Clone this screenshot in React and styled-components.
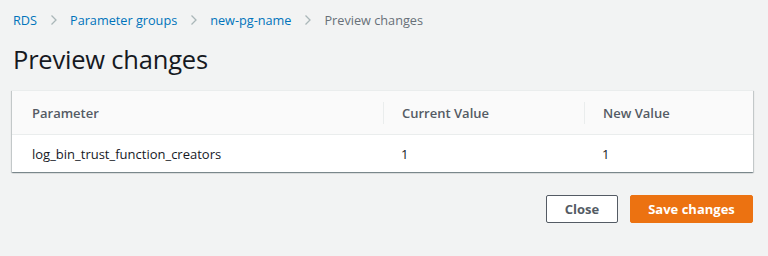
import React from "react";
import styled, { createGlobalStyle } from "styled-components";

const Global = createGlobalStyle`
  html, body { margin: 0; padding: 0; background: #f2f3f3; }
  body { font-family: "Open Sans", "Noto Sans", sans-serif; color: #16191f; }
`;

const Page = styled.div`
  padding: 10px 15px 0 12px;
  display: flex;
  flex-direction: column;
`;

const Crumbs = styled.nav`
  display: flex;
  align-items: center;
  height: 20px;
  font-size: 12.7px;
  padding-left: 1px;
`;

const Crumb = styled.a`
  color: ${(p) => (p.$current ? "#687078" : "#0073bb")};
  text-decoration: none;
`;

const Chevron = styled.svg`
  width: 12px;
  height: 12px;
  margin: 0 10px 0 11px;
  flex: none;
`;

const Title = styled.h1`
  margin: 12px 0 0 1px;
  font-size: 25.5px;
  font-weight: 400;
  line-height: 34px;
  letter-spacing: -0.2px;
`;

const Card = styled.div`
  margin-top: 14px;
  background: #fff;
  box-shadow: 0 1px 1px 0 rgba(0, 28, 36, 0.3), 1px 1px 1px 0 rgba(0, 28, 36, 0.15),
    -1px 1px 1px 0 rgba(0, 28, 36, 0.15);
  border-top: 1px solid #eaeded;
`;

const Row = styled.div`
  display: grid;
  grid-template-columns: 371px 201px 1fr;
  align-items: center;
  height: ${(p) => (p.$head ? "43px" : "37px")};
  background: ${(p) => (p.$head ? "#fafafa" : "#fff")};
  border-bottom: ${(p) => (p.$head ? "1px solid #eaeded" : "none")};
`;

const Cell = styled.div`
  padding-left: ${(p) => (p.$first ? "20px" : "18px")};
  font-size: 13px;
  font-weight: ${(p) => (p.$head ? 600 : 400)};
  color: ${(p) => (p.$head ? "#545b64" : "#16191f")};
  border-left: ${(p) => (p.$sep ? "1px solid #eaeded" : "none")};
  line-height: 22px;
`;

const Actions = styled.div`
  display: flex;
  justify-content: flex-end;
  gap: 12px;
  margin-top: 23px;
`;

const Button = styled.button`
  height: 28px;
  padding: 0;
  width: ${(p) => (p.$primary ? "123px" : "72px")};
  font-family: inherit;
  font-size: 13px;
  font-weight: 700;
  border-radius: 2px;
  border: 1px solid ${(p) => (p.$primary ? "#ec7211" : "#545b64")};
  background: ${(p) => (p.$primary ? "#ec7211" : "#fff")};
  color: ${(p) => (p.$primary ? "#fff" : "#545b64")};
  cursor: pointer;
`;

const Sep = () => (
  <Chevron viewBox="0 0 12 12" fill="none">
    <path d="M3.5 1.5 L8 6 L3.5 10.5" stroke="#aab7b8" strokeWidth="1.3" />
  </Chevron>
);

export default function App() {
  return (
    <>
      <Global />
      <Page>
        <Crumbs>
          <Crumb href="#">RDS</Crumb>
          <Sep />
          <Crumb href="#">Parameter groups</Crumb>
          <Sep />
          <Crumb href="#">new-pg-name</Crumb>
          <Sep />
          <Crumb $current>Preview changes</Crumb>
        </Crumbs>
        <Title>Preview changes</Title>
        <Card>
          <Row $head>
            <Cell $head $first>Parameter</Cell>
            <Cell $head $sep>Current Value</Cell>
            <Cell $head $sep>New Value</Cell>
          </Row>
          <Row>
            <Cell $first>log_bin_trust_function_creators</Cell>
            <Cell>1</Cell>
            <Cell>1</Cell>
          </Row>
        </Card>
        <Actions>
          <Button>Close</Button>
          <Button $primary>Save changes</Button>
        </Actions>
      </Page>
    </>
  );
}
